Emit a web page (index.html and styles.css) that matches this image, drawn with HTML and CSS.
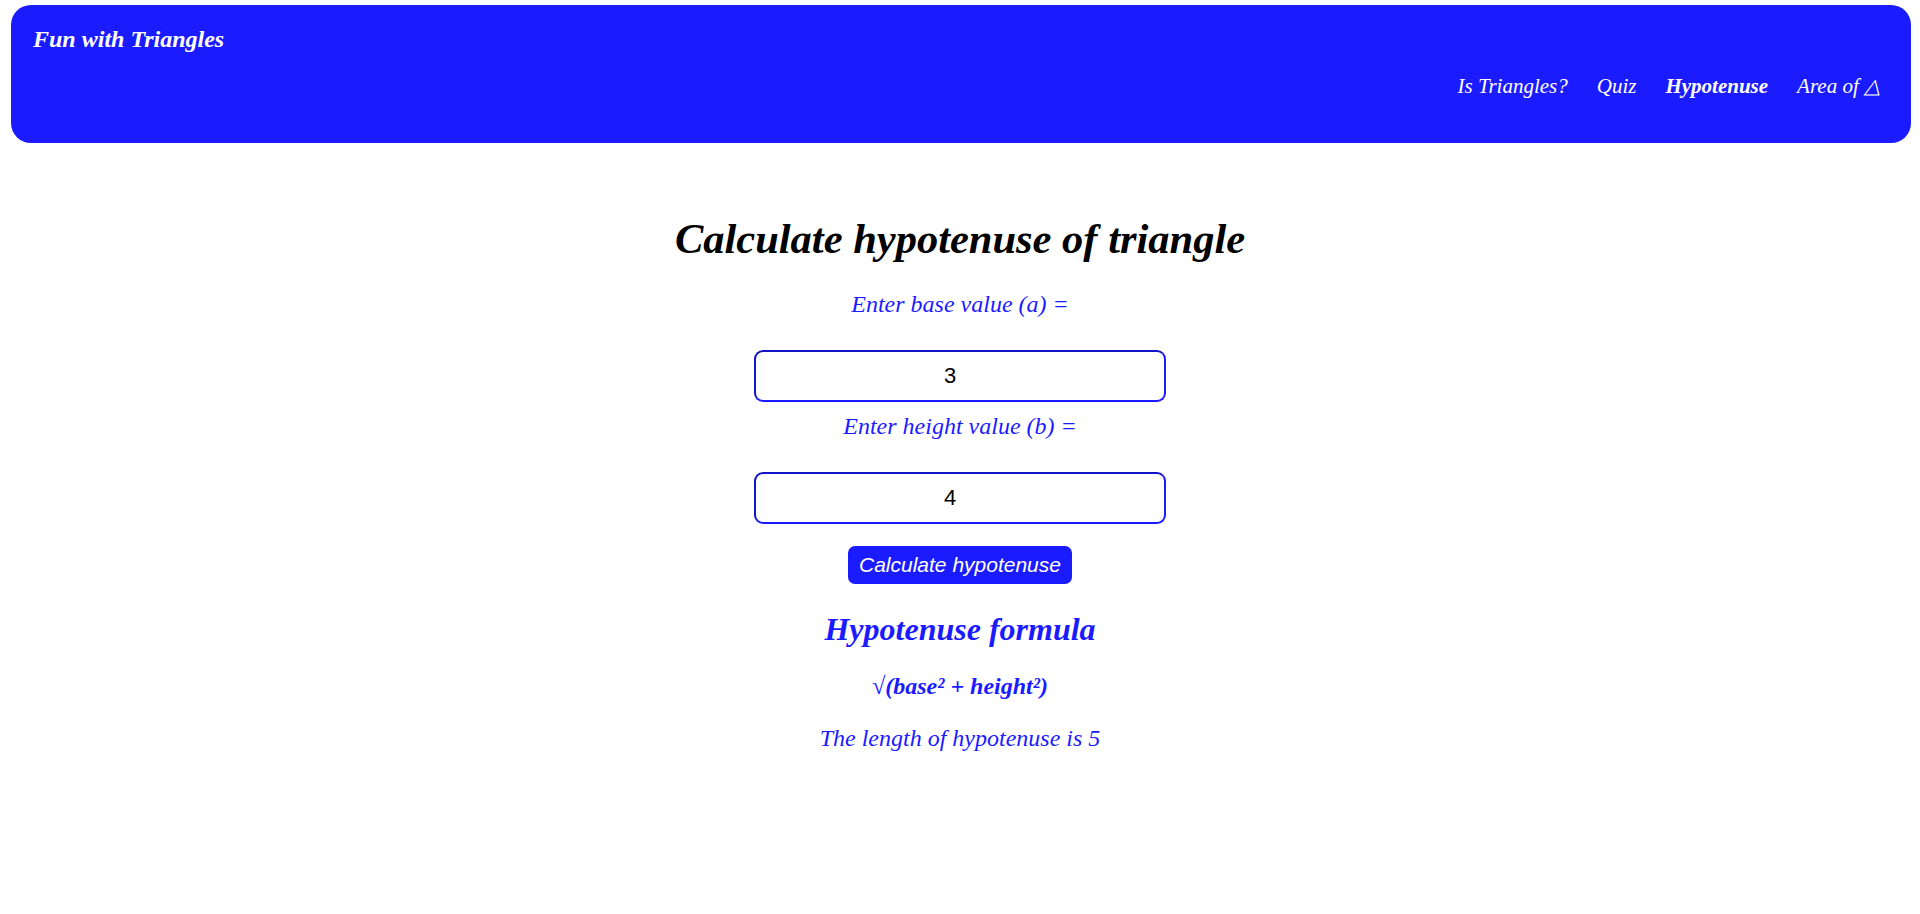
FILE: index.html
```html
<!DOCTYPE html>
<html lang="en">
<head>
<meta charset="utf-8">
<title>Fun with Triangles</title>
<link rel="stylesheet" href="styles.css">
</head>
<body>
<header class="topbar">
  <div class="brand">Fun with Triangles</div>
  <nav class="nav">
    <a class="nav-link" href="#">Is Triangles?</a>
    <a class="nav-link" href="#">Quiz</a>
    <a class="nav-link active" href="#">Hypotenuse</a>
    <a class="nav-link" href="#">Area of △</a>
  </nav>
</header>
<main class="main">
  <h1 class="title">Calculate hypotenuse of triangle</h1>
  <label class="field-label" for="base">Enter base value (a) =</label>
  <input class="field" id="base" type="number" value="3">
  <label class="field-label second" for="height">Enter height value (b) =</label>
  <input class="field" id="height" type="number" value="4">
  <button class="calc-btn" type="button">Calculate hypotenuse</button>
  <h2 class="formula-title">Hypotenuse formula</h2>
  <p class="formula">√(base² + height²)</p>
  <p class="result">The length of hypotenuse is 5</p>
</main>
</body>
</html>
```

FILE: styles.css
```css
* {
  box-sizing: border-box;
}

body {
  margin: 0;
  background: #ffffff;
  font-family: "Liberation Serif", "Times New Roman", serif;
}

.topbar {
  margin: 5px 9px 0 11px;
  height: 138px;
  padding: 19px 31px 0 22px;
  background: #1b1bff;
  border-radius: 20px;
  color: #ffffff;
  display: flex;
  flex-direction: column;
}

.brand {
  font-size: 24px;
  line-height: 30px;
  font-style: italic;
  font-weight: bold;
}

.nav {
  margin-top: 17px;
  display: flex;
  justify-content: flex-end;
  gap: 29px;
}

.nav-link {
  color: #ffffff;
  text-decoration: none;
  font-size: 21px;
  line-height: 30px;
  font-style: italic;
}

.nav-link.active {
  font-weight: bold;
}

.main {
  display: flex;
  flex-direction: column;
  align-items: center;
}

.title {
  margin: 71px 0 0;
  font-size: 42.5px;
  line-height: 50px;
  font-style: italic;
  font-weight: bold;
  color: #000000;
}

.field-label {
  display: block;
  margin-top: 25px;
  font-size: 24px;
  line-height: 30px;
  font-style: italic;
  color: #1b1bff;
}

.field-label.second {
  margin-top: 9px;
}

.field {
  margin-top: 31px;
  width: 412px;
  height: 52px;
  padding: 0 22px 0 2px;
  border: 2px solid #1b1bff;
  border-top-color: #1313c8;
  border-left-color: #1313c8;
  border-radius: 9px;
  text-align: center;
  font-family: "Liberation Sans", Arial, sans-serif;
  font-size: 22px;
  color: #000000;
  background: #ffffff;
  -moz-appearance: textfield;
  appearance: textfield;
  outline: none;
}

.field::-webkit-outer-spin-button,
.field::-webkit-inner-spin-button {
  -webkit-appearance: none;
  margin: 0;
}

.calc-btn {
  margin-top: 22px;
  padding: 7px 11px;
  border: none;
  border-radius: 7px;
  background: #1b1bff;
  color: #ffffff;
  font-family: "Liberation Sans", Arial, sans-serif;
  font-style: italic;
  font-size: 21px;
  line-height: 24px;
}

.formula-title {
  margin: 25px 0 0;
  font-size: 32px;
  line-height: 40px;
  font-style: italic;
  font-weight: bold;
  color: #1b1bff;
}

.formula {
  margin: 22px 0 0;
  font-size: 24px;
  line-height: 30px;
  font-style: italic;
  font-weight: bold;
  color: #1b1bff;
}

.result {
  margin: 22px 0 0;
  font-size: 24px;
  line-height: 30px;
  font-style: italic;
  color: #1b1bff;
}
```
